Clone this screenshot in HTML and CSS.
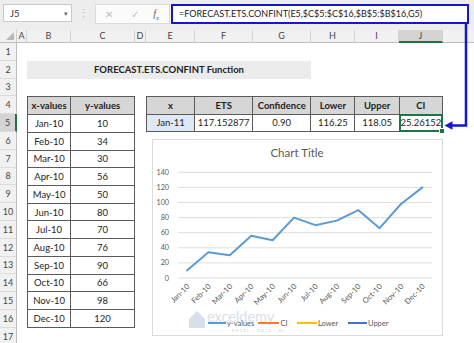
FILE: index.html
```html
<!DOCTYPE html>
<html lang="en">
<head>
    <meta charset="UTF-8">
    <meta name="viewport" content="width=device-width, initial-scale=1.0">
    <title>FORECAST.ETS.CONFINT Function</title>
    <link rel="stylesheet" href="styles.css">
</head>
<body>
<div class="app">
    <!-- formula bar -->
    <div class="formula-bar">
        <div class="name-box"><span>J5</span><span class="caret">&#9662;</span></div>
        <div class="grip">&#8942;</div>
        <div class="fx-buttons">
            <span class="btn">&#10005;</span>
            <span class="btn">&#10003;</span>
            <span class="fx">f<sub>x</sub></span>
        </div>
        <div class="formula-input">=FORECAST.ETS.CONFINT(E5,$C$5:$C$16,$B$5:$B$16,G5)</div>
    </div>

    <!-- sheet -->
    <div class="sheet">
        <div class="corner"></div>
        <div class="col-hd">A</div>
        <div class="col-hd">B</div>
        <div class="col-hd">C</div>
        <div class="col-hd">D</div>
        <div class="col-hd">E</div>
        <div class="col-hd">F</div>
        <div class="col-hd">G</div>
        <div class="col-hd">H</div>
        <div class="col-hd">I</div>
        <div class="col-hd active">J</div>
        <div class="col-hd last"></div>

        <div class="row-hd">1</div>
        <div class="row-hd">2</div>
        <div class="row-hd">3</div>
        <div class="row-hd">4</div>
        <div class="row-hd active">5</div>
        <div class="row-hd">6</div>
        <div class="row-hd">7</div>
        <div class="row-hd">8</div>
        <div class="row-hd">9</div>
        <div class="row-hd">10</div>
        <div class="row-hd">11</div>
        <div class="row-hd">12</div>
        <div class="row-hd">13</div>
        <div class="row-hd">14</div>
        <div class="row-hd">15</div>
        <div class="row-hd">16</div>
        <div class="row-hd">17</div>

        <div class="title-cell">FORECAST.ETS.CONFINT Function</div>

        <div class="xtable">
            <div class="th">x-values</div><div class="th">y-values</div>
            <div>Jan-10</div><div>10</div>
            <div>Feb-10</div><div>34</div>
            <div>Mar-10</div><div>30</div>
            <div>Apr-10</div><div>56</div>
            <div>May-10</div><div>50</div>
            <div>Jun-10</div><div>80</div>
            <div>Jul-10</div><div>70</div>
            <div>Aug-10</div><div>76</div>
            <div>Sep-10</div><div>90</div>
            <div>Oct-10</div><div>66</div>
            <div>Nov-10</div><div>98</div>
            <div>Dec-10</div><div>120</div>
        </div>

        <div class="rtable">
            <div class="th">x</div>
            <div class="th">ETS</div>
            <div class="th">Confidence</div>
            <div class="th">Lower</div>
            <div class="th">Upper</div>
            <div class="th">CI</div>
            <div class="blue">Jan-11</div>
            <div>117.152877</div>
            <div>0.90</div>
            <div>116.25</div>
            <div>118.05</div>
            <div class="sel">25.26152</div>
        </div>
    </div>

    <!-- floating chart -->
    <div class="chart">
        <svg width="291" height="197" viewBox="0 0 291 197">
            <text class="chart-title" x="145" y="18" text-anchor="middle">Chart Title</text>

            <g class="grid">
                <line x1="26" y1="33.3" x2="280" y2="33.3"/>
                <line x1="26" y1="48.4" x2="280" y2="48.4"/>
                <line x1="26" y1="63.5" x2="280" y2="63.5"/>
                <line x1="26" y1="78.6" x2="280" y2="78.6"/>
                <line x1="26" y1="93.7" x2="280" y2="93.7"/>
                <line x1="26" y1="108.8" x2="280" y2="108.8"/>
                <line x1="26" y1="123.9" x2="280" y2="123.9"/>
                <line x1="26" y1="139" x2="280" y2="139"/>
            </g>

            <g class="axis" text-anchor="end">
                <text x="17" y="35.8">140</text>
                <text x="17" y="50.9">120</text>
                <text x="17" y="66">100</text>
                <text x="17" y="81.1">80</text>
                <text x="17" y="96.2">60</text>
                <text x="17" y="111.3">40</text>
                <text x="17" y="126.4">20</text>
                <text x="17" y="141.5">0</text>
            </g>

            <g class="axis xlab" text-anchor="end">
                <text transform="translate(38 148) rotate(-45)">Jan-10</text>
                <text transform="translate(59.4 148) rotate(-45)">Feb-10</text>
                <text transform="translate(80.8 148) rotate(-45)">Mar-10</text>
                <text transform="translate(102.2 148) rotate(-45)">Apr-10</text>
                <text transform="translate(123.6 148) rotate(-45)">May-10</text>
                <text transform="translate(145 148) rotate(-45)">Jun-10</text>
                <text transform="translate(166.4 148) rotate(-45)">Jul-10</text>
                <text transform="translate(187.8 148) rotate(-45)">Aug-10</text>
                <text transform="translate(209.2 148) rotate(-45)">Sep-10</text>
                <text transform="translate(230.6 148) rotate(-45)">Oct-10</text>
                <text transform="translate(252 148) rotate(-45)">Nov-10</text>
                <text transform="translate(273.4 148) rotate(-45)">Dec-10</text>
            </g>

            <polyline class="series" points="35,131.45 56.4,113.33 77.8,116.35 99.2,96.72 120.6,101.25 142,78.6 163.4,86.15 184.8,81.62 206.2,71.05 227.6,89.17 249,65.01 270.4,48.4"/>

            <!-- watermark -->
            <g class="mark">
                <path d="M37 180 L45 172 L53 180 L53 189 L37 189 Z"/>
                <text class="mark-big" x="55" y="183">exceldemy</text>
                <text class="mark-small" x="80" y="193">EXCEL · DATA · BI</text>
            </g>

            <g class="legend">
                <line x1="56" y1="184" x2="74" y2="184" stroke="#5b9bd5"/>
                <text x="75" y="186.7">y-values</text>
                <line x1="106" y1="184" x2="127" y2="184" stroke="#ed7d31"/>
                <text x="128.5" y="186.7">CI</text>
                <line x1="145" y1="184" x2="165" y2="184" stroke="#ffc000"/>
                <text x="166" y="186.7">Lower</text>
                <line x1="196" y1="184" x2="215" y2="184" stroke="#4472c4"/>
                <text x="216" y="186.7">Upper</text>
            </g>
        </svg>
    </div>

    <!-- arrow from formula to result -->
    <svg class="arrow" width="474" height="343" viewBox="0 0 474 343">
        <path d="M466 24 V125.5 H451" fill="none" stroke="#1616cf" stroke-width="2.5"/>
        <polygon points="444.5,125.5 452.5,121.3 452.5,129.7" fill="#1616cf"/>
    </svg>
</div>
</body>
</html>
```

FILE: styles.css
```css
body {
    margin: 0;
    font-family: Lato, "Liberation Sans", sans-serif;
    background: #ffffff;
    color: #222;
}

.app {
    position: relative;
    width: 474px;
    height: 343px;
    overflow: hidden;
    background: #ffffff;
}

/* formula bar */
.formula-bar {
    height: 30px;
    box-sizing: border-box;
    padding: 4px 5px 0 3px;
    display: flex;
    align-items: flex-start;
    background: #ededed;
}
.name-box {
    width: 69px;
    height: 18px;
    box-sizing: border-box;
    border: 1px solid #c9c9c9;
    background: #fff;
    display: flex;
    align-items: center;
    justify-content: space-between;
    padding: 0 3px 0 6px;
    font-size: 9.5px;
    color: #333;
}
.caret {
    font-size: 7px;
    color: #666;
}
.grip {
    width: 23px;
    height: 18px;
    line-height: 18px;
    text-align: center;
    font-size: 11px;
    color: #b4b4b4;
}
.fx-buttons {
    width: 75px;
    height: 20px;
    box-sizing: border-box;
    background: #fbfbfb;
    border: 1px solid #dadada;
    display: flex;
    align-items: center;
}
.fx-buttons .btn {
    width: 26px;
    text-align: center;
    font-size: 10px;
    color: #bdbdbd;
}
.fx-buttons .fx {
    width: 16px;
    text-align: center;
    font-family: "Liberation Serif", serif;
    font-style: italic;
    font-size: 10px;
    color: #555;
}
.fx sub {
    font-size: 6px;
}
.formula-input {
    flex: 1;
    margin-left: 1px;
    height: 20px;
    box-sizing: border-box;
    border: 2px solid #1616cf;
    background: #fff;
    padding-left: 6px;
    font-size: 9px;
    line-height: 16px;
    color: #222;
    white-space: nowrap;
}

/* sheet grid */
.sheet {
    display: grid;
    grid-template-columns: 17px 10px 44px 64px 11px 49px 58px 58px 44px 44px 44px 1fr;
    grid-template-rows: 13px repeat(17, 17.8px);
}
.corner {
    background: #f1f1f1;
    border-right: 1px solid #cfcfcf;
    border-bottom: 1px solid #bdbdbd;
    display: flex;
    align-items: flex-end;
    justify-content: flex-end;
    padding: 0 2px 2px 0;
    box-sizing: border-box;
}
.corner::after {
    content: "";
    width: 0;
    height: 0;
    border-left: 8px solid transparent;
    border-bottom: 8px solid #b9b9b9;
}
.col-hd {
    background: #f1f1f1;
    border-right: 1px solid #d3d3d3;
    border-bottom: 1px solid #bdbdbd;
    box-sizing: border-box;
    text-align: center;
    font-size: 9px;
    line-height: 12px;
    color: #444;
}
.col-hd.active {
    background: #d4d4d4;
    border-bottom: 2px solid #217346;
}
.col-hd.last {
    border-right: none;
}
.row-hd {
    grid-column: 1;
    background: #f1f1f1;
    border-right: 1px solid #bdbdbd;
    border-bottom: 1px solid #dcdcdc;
    box-sizing: border-box;
    display: flex;
    align-items: center;
    justify-content: center;
    font-size: 9px;
    color: #444;
}
.row-hd.active {
    background: #d4d4d4;
    border-right: 2px solid #217346;
}

.title-cell {
    grid-row: 3;
    grid-column: 3 / 9;
    background: #ebebeb;
    display: flex;
    align-items: center;
    justify-content: center;
    font-size: 9.5px;
    font-weight: bold;
    color: #222;
}

/* data tables */
.xtable,
.rtable {
    display: grid;
    gap: 1px;
    background: #5a5a5a;
    border: 1px solid #5a5a5a;
    box-sizing: border-box;
    grid-auto-rows: 1fr;
}
.xtable {
    grid-row: 5 / 18;
    grid-column: 3 / 5;
    grid-template-columns: 43fr 64fr;
}
.rtable {
    grid-row: 5 / 7;
    grid-column: 6 / 12;
    grid-template-columns: 48fr 58fr 58fr 44fr 44fr 43fr;
}
.xtable div,
.rtable div {
    background: #fff;
    display: flex;
    align-items: center;
    justify-content: center;
    font-size: 9.5px;
    color: #1e1e1e;
}
.xtable .th,
.rtable .th {
    background: #d6d6d6;
    font-weight: bold;
}
.rtable .blue {
    background: #dde9f6;
}
.rtable .sel {
    position: relative;
    outline: 2px solid #217346;
    outline-offset: -1px;
}
.rtable .sel::after {
    content: "";
    position: absolute;
    right: -3px;
    bottom: -3px;
    width: 4px;
    height: 4px;
    background: #217346;
    border: 1px solid #fff;
}

/* chart */
.chart {
    position: absolute;
    left: 152px;
    top: 139px;
    width: 291px;
    height: 197px;
    box-sizing: border-box;
    border: 1px solid #dadada;
    background: #fff;
}
.chart svg {
    display: block;
    margin: -1px;
}
.chart-title {
    font-size: 11.5px;
    fill: #595959;
}
.grid line {
    stroke: #dedede;
    stroke-width: 1;
}
.axis text {
    font-size: 7.2px;
    fill: #595959;
}
.xlab text {
    font-size: 7.6px;
}
.series {
    fill: none;
    stroke: #5b9bd5;
    stroke-width: 2;
    stroke-linejoin: round;
    stroke-linecap: round;
}
.mark {
    opacity: 0.45;
}
.mark path {
    fill: #a9bad3;
}
.mark-big {
    font-size: 14.5px;
    fill: #a9bad3;
}
.mark-small {
    font-size: 4.5px;
    letter-spacing: 1px;
    fill: #9aa5b5;
}
.legend line {
    stroke-width: 2;
}
.legend text {
    font-size: 7.5px;
    fill: #595959;
}

.arrow {
    position: absolute;
    left: 0;
    top: 0;
    pointer-events: none;
}
```
